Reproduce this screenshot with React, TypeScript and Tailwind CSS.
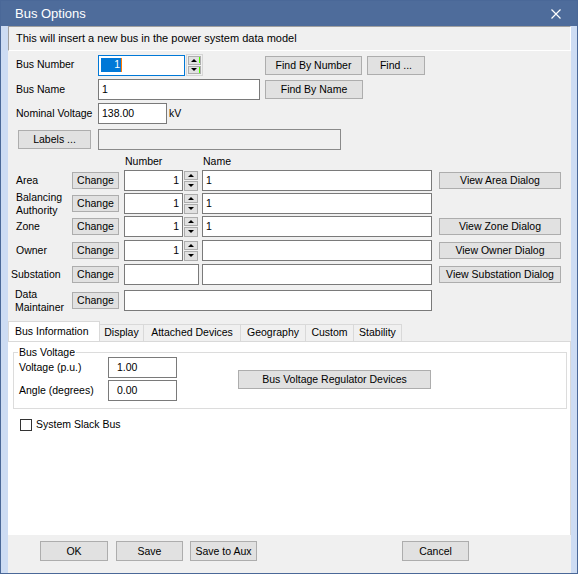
import React from "react";

function Btn({ children, className = "" }: { children: React.ReactNode; className?: string }) {
  return (
    <div
      className={`flex shrink-0 items-center justify-center border border-[#adadad] bg-[#e1e1e1] text-[10.5px] leading-none text-black ${className}`}
    >
      {children}
    </div>
  );
}

function Field({ children, className = "" }: { children?: React.ReactNode; className?: string }) {
  return (
    <div
      className={`flex h-[21px] shrink-0 items-center border border-[#7a7a7a] bg-white px-[3px] text-[10.5px] text-black ${className}`}
    >
      {children}
    </div>
  );
}

function Up() {
  return <span className="h-0 w-0 border-x-[3px] border-b-[3px] border-x-transparent border-b-black" />;
}
function Down() {
  return <span className="h-0 w-0 border-x-[3px] border-t-[3px] border-x-transparent border-t-black" />;
}

// small spinner next to the number boxes
function Spin() {
  return (
    <div className="ml-[1px] flex h-[20px] w-[14px] shrink-0 flex-col gap-[1px]">
      <div className="flex flex-1 items-center justify-center border border-[#adadad] bg-[#e1e1e1]">
        <Up />
      </div>
      <div className="flex flex-1 items-center justify-center border border-[#adadad] bg-[#e1e1e1]">
        <Down />
      </div>
    </div>
  );
}

const tabs = [
  { name: "Display", w: "w-[44px]" },
  { name: "Attached Devices", w: "w-[97px]" },
  { name: "Geography", w: "w-[65px]" },
  { name: "Custom", w: "w-[48px]" },
  { name: "Stability", w: "w-[48px]" },
];

export default function App() {
  return (
    <div className="flex h-[574px] w-[578px] flex-col border border-[#4a6898] bg-[#cddcf3] font-['Liberation_Sans',Arial,sans-serif] text-black">
      {/* title bar */}
      <div className="flex h-[25px] shrink-0 items-center justify-between bg-[#4e6c9b] pl-[14px] pr-[16px]">
        <span className="text-[13px] text-white">Bus Options</span>
        <svg width="10" height="10" viewBox="0 0 10 10">
          <path d="M0.5 0.5 L9.5 9.5 M9.5 0.5 L0.5 9.5" stroke="#fff" strokeWidth="1.2" />
        </svg>
      </div>

      <div className="ml-[7px] mr-[6px] flex flex-1 flex-col bg-[#f0f0f0]">
        {/* info strip */}
        <div className="flex h-[25px] shrink-0 items-center border-b border-l border-r border-t border-b-white border-l-[#a0a0a0] border-r-white border-t-[#a0a0a0] pl-[7px] text-[11px]">
          This will insert a new bus in the power system data model
        </div>

        {/* form */}
        <div className="flex h-[270px] shrink-0 flex-col text-[10.5px]">
          <div className="mt-[3px] flex h-[22px] items-center pl-[8px]">
            <span className="w-[82px] shrink-0">Bus Number</span>
            <div className="flex h-[21px] w-[87px] shrink-0 items-center border border-[#0078d7] bg-white">
              <div className="ml-[2px] flex h-[14px] w-[20px] items-center justify-end bg-[#0078d7] pr-[1px] text-white">1</div>
              <div className="h-[14px] w-[1px] bg-[#ff7a00]" />
            </div>
            <div className="ml-[1px] flex h-[22px] w-[17px] shrink-0 flex-col gap-[1px] border border-[#d6d6d6] p-[1px]">
              <div className="flex flex-1 items-center justify-center border border-[#adadad] bg-[#e1e1e1] pl-[2px]">
                <Up />
                <span className="ml-[2px] h-[6px] w-[1px] bg-[#4cff00]" />
              </div>
              <div className="flex flex-1 items-center justify-center border border-[#adadad] bg-[#e1e1e1] pl-[2px]">
                <Down />
                <span className="ml-[2px] h-[6px] w-[1px] bg-[#4cff00]" />
              </div>
            </div>
            <Btn className="ml-[62px] h-[19px] w-[97px]">Find By Number</Btn>
            <Btn className="ml-[5px] h-[19px] w-[58px]">Find ...</Btn>
          </div>

          <div className="mt-[3px] flex h-[21px] items-center pl-[8px]">
            <span className="w-[82px] shrink-0">Bus Name</span>
            <Field className="w-[162px]">1</Field>
            <Btn className="ml-[5px] h-[19px] w-[98px]">Find By Name</Btn>
          </div>

          <div className="mt-[3px] flex h-[21px] items-center pl-[8px]">
            <span className="w-[82px] shrink-0">Nominal Voltage</span>
            <Field className="w-[69px]">138.00</Field>
            <span className="ml-[2px]">kV</span>
          </div>

          <div className="mt-[5px] flex h-[21px] items-center pl-[10px]">
            <Btn className="h-[19px] w-[73px]">Labels ...</Btn>
            <div className="ml-[7px] h-[21px] w-[243px] border border-[#8a8a8a] bg-[#f0f0f0]" />
          </div>

          <div className="mt-[5px] flex h-[14px] items-center pl-[117px]">
            <span className="w-[78px]">Number</span>
            <span>Name</span>
          </div>

          {/* area */}
          <div className="mt-[1px] flex h-[21px] items-center pl-[8px]">
            <span className="w-[56px] shrink-0">Area</span>
            <Btn className="h-[17px] w-[47px]">Change</Btn>
            <Field className="ml-[5px] w-[59px] justify-end">1</Field>
            <Spin />
            <Field className="ml-[4px] w-[230px]">1</Field>
            <Btn className="ml-[7px] h-[17px] w-[122px]">View Area Dialog</Btn>
          </div>

          <div className="mt-[2px] flex h-[21px] items-center pl-[8px]">
            <span className="w-[56px] shrink-0 leading-[13px]">
              Balancing
              <br />
              Authority
            </span>
            <Btn className="h-[17px] w-[47px]">Change</Btn>
            <Field className="ml-[5px] w-[59px] justify-end">1</Field>
            <Spin />
            <Field className="ml-[4px] w-[230px]">1</Field>
          </div>

          <div className="mt-[2px] flex h-[21px] items-center pl-[8px]">
            <span className="w-[56px] shrink-0">Zone</span>
            <Btn className="h-[17px] w-[47px]">Change</Btn>
            <Field className="ml-[5px] w-[59px] justify-end">1</Field>
            <Spin />
            <Field className="ml-[4px] w-[230px]">1</Field>
            <Btn className="ml-[7px] h-[17px] w-[122px]">View Zone Dialog</Btn>
          </div>

          <div className="mt-[3px] flex h-[21px] items-center pl-[8px]">
            <span className="w-[56px] shrink-0">Owner</span>
            <Btn className="h-[17px] w-[47px]">Change</Btn>
            <Field className="ml-[5px] w-[59px] justify-end">1</Field>
            <Spin />
            <Field className="ml-[4px] w-[230px]" />
            <Btn className="ml-[7px] h-[17px] w-[122px]">View Owner Dialog</Btn>
          </div>

          <div className="mt-[3px] flex h-[21px] items-center pl-[3px]">
            <span className="w-[61px] shrink-0">Substation</span>
            <Btn className="h-[17px] w-[47px]">Change</Btn>
            <Field className="ml-[5px] w-[75px]" />
            <Field className="ml-[3px] w-[230px]" />
            <Btn className="ml-[7px] h-[17px] w-[122px]">View Substation Dialog</Btn>
          </div>

          <div className="mt-[5px] flex h-[21px] items-center pl-[7px]">
            <span className="w-[57px] shrink-0 leading-[13px]">
              Data
              <br />
              Maintainer
            </span>
            <Btn className="h-[17px] w-[47px]">Change</Btn>
            <Field className="ml-[5px] w-[308px]" />
          </div>
        </div>

        {/* tabs */}
        <div className="flex h-[20px] shrink-0 items-end text-[10.5px]">
          <div className="flex h-[20px] w-[92px] items-center border border-b-0 border-[#d9d9d9] bg-white pl-[6px]">
            Bus Information
          </div>
          {tabs.map((t) => (
            <div
              key={t.name}
              className={`flex h-[17px] items-center justify-center border border-b-0 border-l-0 border-[#d9d9d9] bg-[#f0f0f0] ${t.w}`}
            >
              {t.name}
            </div>
          ))}
        </div>

        <div className="flex h-[194px] shrink-0 flex-col border-r border-t border-[#d9d9d9] bg-white text-[10.5px]">
          <fieldset className="ml-[5px] mt-[4px] w-[554px] border border-[#dcdcdc]">
            <legend className="ml-[4px] px-[1px] leading-[12px]">Bus Voltage</legend>
            <div className="-mt-[1px] flex items-center pb-[7px]">
              <div className="flex flex-col gap-[2px] pl-[5px]">
                <div className="flex h-[21px] items-center">
                  <span className="w-[89px] shrink-0">Voltage (p.u.)</span>
                  <Field className="w-[69px] pl-[8px]">1.00</Field>
                </div>
                <div className="flex h-[21px] items-center">
                  <span className="w-[89px] shrink-0">Angle (degrees)</span>
                  <Field className="w-[69px] pl-[8px]">0.00</Field>
                </div>
              </div>
              <Btn className="ml-[61px] h-[19px] w-[193px]">Bus Voltage Regulator Devices</Btn>
            </div>
          </fieldset>

          <div className="mt-[9px] flex h-[13px] items-center pl-[12px]">
            <div className="h-[12px] w-[12px] border border-[#333] bg-white" />
            <span className="ml-[4px]">System Slack Bus</span>
          </div>
        </div>

        {/* bottom buttons */}
        <div className="flex flex-1 items-start pl-[32px] pt-[6px]">
          <Btn className="h-[20px] w-[68px]">OK</Btn>
          <Btn className="ml-[8px] h-[20px] w-[67px]">Save</Btn>
          <Btn className="ml-[7px] h-[20px] w-[67px]">Save to Aux</Btn>
          <Btn className="ml-[145px] h-[20px] w-[67px]">Cancel</Btn>
        </div>
      </div>
    </div>
  );
}
